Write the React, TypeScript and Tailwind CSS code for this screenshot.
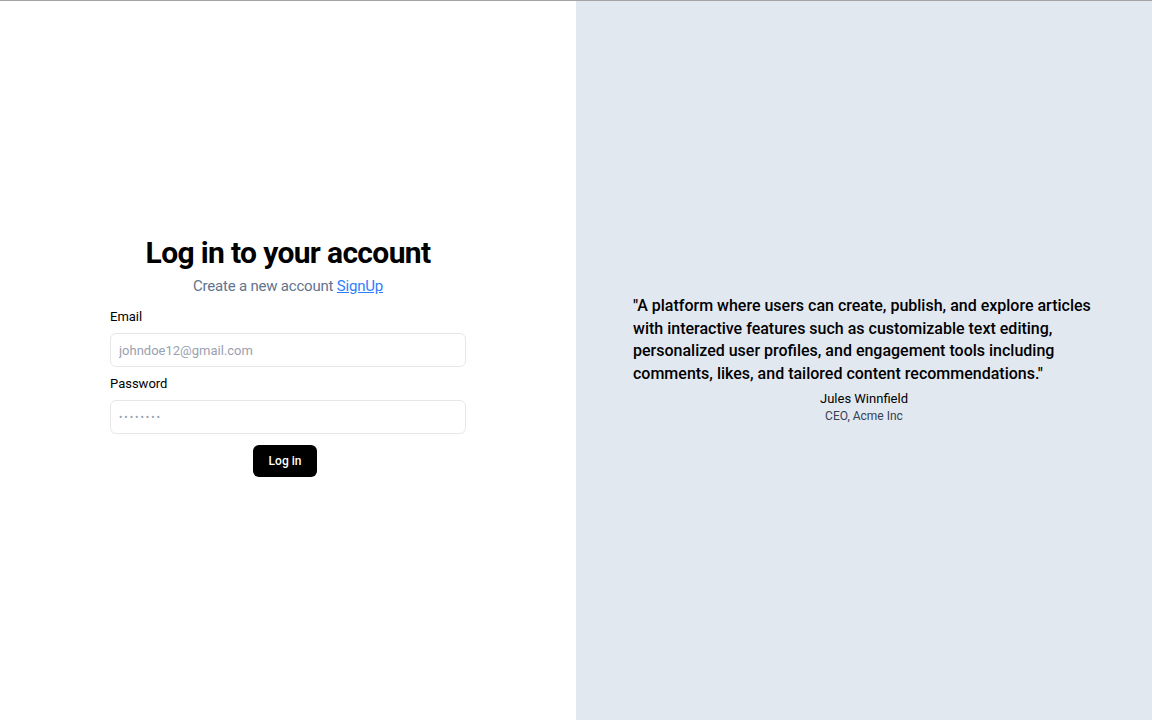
export default function App() {
  return (
    <div
      className="flex h-[720px] w-full border-t border-[#a3a3a3] bg-white text-black"
      style={{ fontFamily: "Roboto, 'Noto Sans', sans-serif" }}
    >
      {/* left: login form */}
      <div className="flex w-1/2 flex-col items-center justify-center pb-[9px]">
        <div className="flex w-[356px] flex-col">
          <h1 className="text-center text-[30px] font-bold leading-9 tracking-[-0.65px]">
            Log in to your account
          </h1>
          <p className="mt-[3px] text-center text-[15px] leading-6 tracking-[-0.2px] text-slate-500">
            Create a new account{" "}
            <a href="#" className="text-blue-500 underline">
              SignUp
            </a>
          </p>
          <label className="mt-[9px] text-[13px] leading-5">Email</label>
          <input
            type="email"
            placeholder="johndoe12@gmail.com"
            className="mt-[6px] h-[34px] rounded-md border border-gray-200 px-2 text-[13px] outline-none placeholder:text-gray-400"
          />
          <label className="mt-[7px] text-[13px] leading-5">Password</label>
          <input
            type="password"
            placeholder="••••••••"
            className="mt-[6px] h-[34px] rounded-md border border-gray-200 px-2 text-[10px] tracking-[2px] outline-none placeholder:text-gray-400"
          />
          <button className="mx-auto mt-[11px] h-8 w-16 -translate-x-[3px] rounded-md bg-black text-xs font-medium text-white">
            Log in
          </button>
        </div>
      </div>

      {/* right: testimonial */}
      <div className="flex w-1/2 flex-col justify-center bg-slate-200 px-[57px] pb-[2px]">
        <blockquote className="text-base font-medium leading-[22.5px]">
          "A platform where users can create, publish, and explore articles
          with interactive features such as customizable text editing,
          personalized user profiles, and engagement tools including comments,
          likes, and tailored content recommendations."
        </blockquote>
        <div className="mt-[6px] text-center">
          <p className="text-[13px] leading-4">Jules Winnfield</p>
          <p className="mt-px text-xs leading-4 text-gray-700">CEO, Acme Inc</p>
        </div>
      </div>
    </div>
  );
}
